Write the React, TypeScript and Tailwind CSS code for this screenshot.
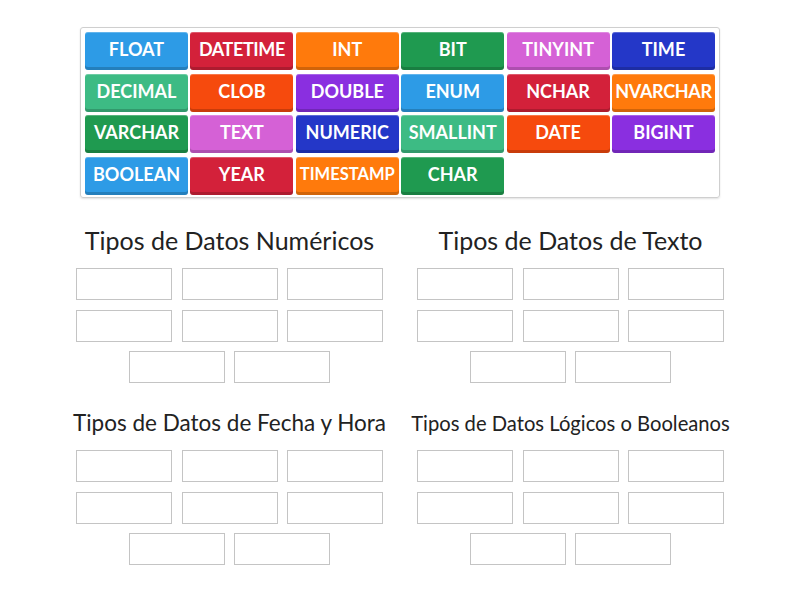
import React from "react";

type Tile = { label: string; bg: string; size?: string };

const tiles: Tile[] = [
  { label: "FLOAT", bg: "bg-[#2d9be6]" },
  { label: "DATETIME", bg: "bg-[#d3213a]", size: "text-[18px] tracking-[-0.4px]" },
  { label: "INT", bg: "bg-[#ff7a0c]" },
  { label: "BIT", bg: "bg-[#1f9a50]" },
  { label: "TINYINT", bg: "bg-[#d561d6]" },
  { label: "TIME", bg: "bg-[#2437c8]" },
  { label: "DECIMAL", bg: "bg-[#3dbb84]" },
  { label: "CLOB", bg: "bg-[#f64a0d]" },
  { label: "DOUBLE", bg: "bg-[#8a2fe0]" },
  { label: "ENUM", bg: "bg-[#2d9be6]" },
  { label: "NCHAR", bg: "bg-[#d3213a]" },
  { label: "NVARCHAR", bg: "bg-[#ff7a0c]", size: "text-[18px] tracking-[-0.3px]" },
  { label: "VARCHAR", bg: "bg-[#1f9a50]" },
  { label: "TEXT", bg: "bg-[#d561d6]" },
  { label: "NUMERIC", bg: "bg-[#2437c8]" },
  { label: "SMALLINT", bg: "bg-[#3dbb84]" },
  { label: "DATE", bg: "bg-[#f64a0d]" },
  { label: "BIGINT", bg: "bg-[#8a2fe0]" },
  { label: "BOOLEAN", bg: "bg-[#2d9be6]" },
  { label: "YEAR", bg: "bg-[#d3213a]" },
  { label: "TIMESTAMP", bg: "bg-[#ff7a0c]", size: "text-[16.5px]" },
  { label: "CHAR", bg: "bg-[#1f9a50]" },
];

function Group({ title, size }: { title: string; size: string }) {
  return (
    <div className="flex flex-col items-center">
      <div className={`h-[28px] flex items-center justify-center whitespace-nowrap text-[#222] ${size}`}>
        {title}
      </div>
      <div className="mt-[13px] flex flex-wrap justify-center gap-x-[9.5px] gap-y-[9.5px] w-[307px]">
        {Array.from({ length: 8 }).map((_, i) => (
          <div key={i} className="w-[96px] h-[32px] border border-[#c4c4c4] bg-white" />
        ))}
      </div>
    </div>
  );
}

export default function App() {
  return (
    <div className="w-[800px] h-[600px] bg-white pt-[27px]" style={{ fontFamily: "Lato, 'Open Sans', sans-serif" }}>
      <div className="mx-auto w-[640px] h-[171px] border border-[#cfcfcf] rounded-[3px] shadow-[0_1px_2px_rgba(0,0,0,0.12)] px-[4px] pt-[4px]">
        <div className="grid grid-cols-6 gap-x-[2.4px] gap-y-[3.5px]">
          {tiles.map((t) => (
            <div
              key={t.label}
              className={`${t.bg} ${t.size ?? "text-[18px]"} h-[38px] pb-[3px] rounded-[3px] flex items-center justify-center whitespace-nowrap text-white font-bold shadow-[inset_0_-3px_0_rgba(0,0,0,0.18),inset_0_1px_0_rgba(255,255,255,0.25)]`}
            >
              {t.label}
            </div>
          ))}
        </div>
      </div>
      <div className="mx-auto w-[647px] grid grid-cols-2 gap-x-[35px] mt-[29px]">
        <Group title="Tipos de Datos Numéricos" size="text-[25px]" />
        <Group title="Tipos de Datos de Texto" size="text-[25px]" />
      </div>
      <div className="mx-auto w-[647px] grid grid-cols-2 gap-x-[35px] mt-[26px]">
        <Group title="Tipos de Datos de Fecha y Hora" size="text-[22.5px]" />
        <Group title="Tipos de Datos Lógicos o Booleanos" size="text-[20.2px]" />
      </div>
    </div>
  );
}
